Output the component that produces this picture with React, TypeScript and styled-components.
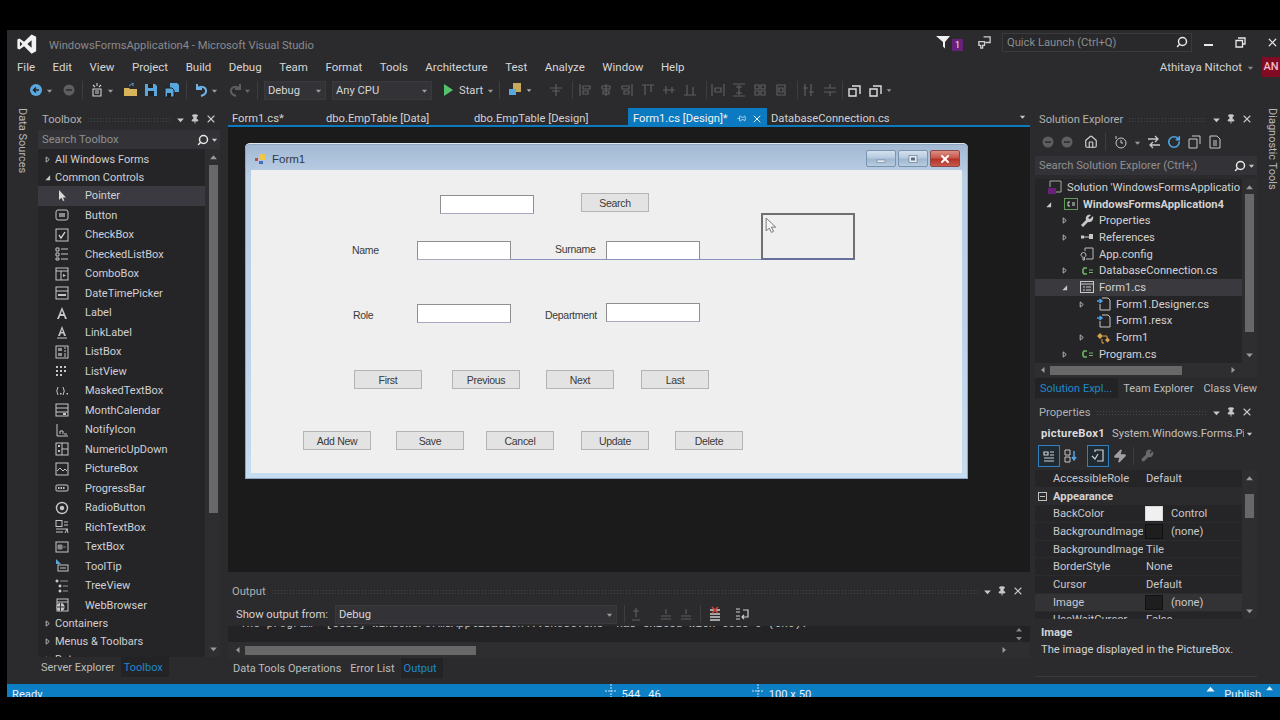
import React from "react";
import styled, { createGlobalStyle } from "styled-components";
import { Home, Pin, RotateCw, Search, Wrench, X, Zap } from "lucide-react";

const Global = createGlobalStyle`
  html, body { margin: 0; padding: 0; background: #000; }
  * { box-sizing: border-box; }
`;

const Screen = styled.div`
  width: 1280px;
  height: 720px;
  background: #000;
  padding: 30px 0 23px 7px;
  overflow: hidden;
  font-family: Roboto, "Liberation Sans", sans-serif;
  font-size: 11.2px;
  color: #d2d2d2;
`;

const Ide = styled.div`
  height: 667px;
  background: #2b2b2e;
  display: flex;
  flex-direction: column;
`;

/* ---------- small drawings ---------- */

const Svg = styled.svg<{ $w?: number }>`
  width: ${(p) => p.$w ?? 16}px;
  height: ${(p) => p.$w ?? 16}px;
  flex: none;
  display: block;
`;

const Tri = ({ dir = "down", color = "#c8c8c8", size = 7 }: { dir?: "down" | "right" | "open" | "up" | "left" | "east"; color?: string; size?: number }) => {
  const paths: Record<string, React.ReactNode> = {
    down: <path d="M1 3h6L4 6.500z" fill={color} />,
    up: <path d="M1 5.500h6L4 2z" fill={color} />,
    left: <path d="M5.500 1v6L2 4z" fill={color} />,
    east: <path d="M2.500 1v6L6 4z" fill={color} />,
    right: <path d="M2.500 1v6L6 4z" fill="none" stroke={color} strokeWidth="1" />,
    open: <path d="M7 1.500V7H1.500z" fill={color} />,
  };
  return <Svg $w={size} viewBox="0 0 8 8">{paths[dir]}</Svg>;
};

const Logo = () => (
  <Svg $w={22} viewBox="0 0 24 24">
    <path fill="#f2f2f2" fillRule="evenodd" d="M17 1.500l5 2.500v16l-5 2.500-8.200-8L3.800 18 1.500 16.800V7.200L3.800 6l5 3.500zM17 8l-4.600 4 4.600 4zM4.300 9.400v5.200L7 12z" />
  </Svg>
);

const g = "#c6c6c6";
const toolGlyphs: Record<string, React.ReactNode> = {
  Pointer: <path d="M5 2v10l2.400-2.200L9 13l1.400-.6-1.500-3H12z" fill="#d8d8d8" />,
  Button: <><rect x="2" y="3" width="12" height="10" rx="2" fill="none" stroke={g} /><rect x="5" y="6" width="6" height="4" fill="#8a8a8a" /></>,
  CheckBox: <><rect x="2" y="2" width="12" height="12" fill="none" stroke={g} /><path d="M5 8l2 3 4-6" fill="none" stroke="#e0e0e0" strokeWidth="1.300" /></>,
  CheckedListBox: <path d="M2 2h3v3H2zM2 7h3v3H2zM2 12h3v2H2zM7 3h7M7 8h7M7 13h7" fill="none" stroke={g} />,
  ComboBox: <><rect x="2" y="2" width="12" height="12" fill="none" stroke={g} /><path d="M2 5h12M7 5v9" stroke={g} /><path d="M9 8v3l3-1.500z" fill={g} /></>,
  DateTimePicker: <><rect x="2" y="2" width="12" height="12" fill="none" stroke={g} /><path d="M2 6h12" stroke={g} /><rect x="4" y="9" width="8" height="2" fill={g} /></>,
  Label: <path d="M8 2L3 14h2l1-3h4l1 3h2zM6.800 9L8 5.500 9.200 9z" fill={g} />,
  LinkLabel: <><path d="M8 2L4 12h2l.8-2.500h2.400L10 12h2zM7.200 8L8 5l.8 3z" fill={g} /><path d="M3 14h10" stroke={g} /></>,
  ListBox: <><rect x="2" y="2" width="12" height="12" fill="none" stroke={g} /><path d="M4 4h4v3H4zM4 9h4v3H4z" fill="#8f8f8f" /><path d="M10 4h2M10 7h2M10 10h2M10 12h2" stroke={g} /></>,
  ListView: <path d="M2 3h2v2H2zM6 3h2v2H6zM10 3h2v2h-2zM2 7h2v2H2zM6 7h2v2H6zM10 7h2v2h-2zM2 11h2v2H2zM6 11h2v2H6z" fill={g} />,
  MaskedTextBox: <><path d="M4 4Q1.500 8 4 12M9 4q2.500 4 0 8" fill="none" stroke={g} /><path d="M6 10h1.500v1.500H6zM12.500 10H14v1.500h-1.500z" fill={g} /></>,
  MonthCalendar: <><rect x="2" y="2" width="12" height="12" fill="none" stroke={g} /><path d="M2 6h12M2 10h12" stroke={g} /><rect x="9" y="11" width="3" height="2" fill={g} /></>,
  NotifyIcon: <path d="M3 2v12h11M6 12V9h3v3M10 12h3" fill="none" stroke={g} />,
  NumericUpDown: <><rect x="2" y="2" width="12" height="12" fill="none" stroke={g} /><path d="M8 2v12M8 8h6" stroke={g} /><path d="M4 5h2M4 10h2" stroke={g} strokeWidth="2" /></>,
  PictureBox: <><rect x="2" y="2" width="12" height="12" fill="none" stroke={g} /><path d="M3 10l3-3 3 3 2-2 2 2" fill="none" stroke={g} /></>,
  ProgressBar: <><rect x="2" y="5" width="12" height="6" rx="1" fill="none" stroke={g} /><path d="M4 7h1.500v2H4zM6.500 7H8v2H6.500zM9 7h1.500v2H9z" fill={g} /></>,
  RadioButton: <><circle cx="8" cy="8" r="5.500" fill="none" stroke={g} strokeWidth="1.400" /><circle cx="8" cy="8" r="2.200" fill={g} /></>,
  RichTextBox: <><rect x="2" y="1.500" width="6" height="6" fill="none" stroke={g} /><path d="M10 3h4M10 6h4M2 10h12M2 13h7" stroke={g} /><path d="M11 14l2-4 1 4" fill="none" stroke={g} /></>,
  TextBox: <><rect x="2" y="3" width="12" height="10" fill="none" stroke={g} /><path d="M4 6h4v4H4zM9 8h3" fill="#8a8a8a" stroke="#8a8a8a" /></>,
  ToolTip: <><path d="M2 1l5 5H2z" fill="#5aa7de" /><rect x="4" y="7" width="10" height="6" fill="none" stroke={g} /><path d="M6 10h6" stroke={g} /></>,
  TreeView: <path d="M2 2h2v2H2zM6 3h8M5 7h2v2H5zM9 8h5M5 12h2v2H5zM9 13h5" fill={g} stroke={g} strokeWidth=".7" />,
  WebBrowser: <><rect x="3" y="2" width="11" height="12" fill="none" stroke={g} /><path d="M3 5h11" stroke={g} /><circle cx="6.500" cy="10" r="4" fill={g} /><path d="M3 10h7M6.500 6v8" stroke="#333" /></>,
};

const SmallFile = ({ kind }: { kind: string }) => {
  switch (kind) {
    case "solution":
      return <Svg viewBox="0 0 16 16"><path d="M3 8V2h11v11H9" fill="none" stroke="#aaa" /><rect x="1" y="9" width="8" height="6" fill="#68217a" /></Svg>;
    case "project":
      return <Svg viewBox="0 0 16 16"><rect x="1.500" y="2.500" width="13" height="11" fill="none" stroke="#5d9c55" /><path d="M7 6H5v4h2M9 7h3M9 9h3" fill="none" stroke="#cfe2cd" /></Svg>;
    case "wrench":
      return <Svg viewBox="0 0 16 16"><path d="M14 3l-3 3-2-1 3-3C9 1 6 3 7 7l-5 5 2 2 5-5c4 1 6-3 5-6z" fill="#c8c8c8" /></Svg>;
    case "refs":
      return <Svg viewBox="0 0 16 16"><path d="M2 6.500h3v3H2zM10 5h4v5h-4z" fill="#c8c8c8" /><path d="M5 8h5" stroke="#c8c8c8" /></Svg>;
    case "config":
      return <Svg viewBox="0 0 16 16"><path d="M6 5V2h8v11H7" fill="none" stroke="#bbb" /><path d="M2 9a2.500 2.500 0 0 1 5 0c0 1-1 2-1.500 2v3H4v-3C3 11 2 10 2 9z" fill="none" stroke="#bbb" /></Svg>;
    case "cs":
      return <Svg viewBox="0 0 16 16"><path d="M8 5H5L4 6.500v3L5 11h3" fill="none" stroke="#6fb367" strokeWidth="1.600" /><path d="M10 7h4M10 9.500h4" stroke="#6fb367" strokeWidth="1.200" /></Svg>;
    case "form":
      return <Svg viewBox="0 0 16 16"><rect x="1.500" y="2.500" width="13" height="11" fill="none" stroke="#c8c8c8" /><path d="M1.500 5h13M4 8h2M4 11h2M7 8h5M7 11h5" stroke="#c8c8c8" /></Svg>;
    case "class":
      return <Svg viewBox="0 0 16 16"><path d="M1 6l3-3 3 3-3 3zM9 10l2.500-2.500L14 10l-2.500 2.500z" fill="#d8a24a" /><path d="M7 6h4v2M8 13h-2V9" stroke="#d8a24a" fill="none" /></Svg>;
    default:
      return <Svg viewBox="0 0 16 16"><path d="M6 2h6l2 2v10H4V8" fill="none" stroke="#c8c8c8" /><path d="M1 5h4M3.500 3L6 5 3.500 7" fill="none" stroke="#4ea6e6" strokeWidth="1.400" /></Svg>;
  }
};

/* ---------- title bar, menu ---------- */

const TitleBar = styled.div`
  height: 27px;
  display: flex;
  align-items: center;
  padding: 0 0 0 9px;
`;

const WindowTitle = styled.span`
  margin-left: 11px;
  margin-top: 4px;
  color: #8a8a8c;
`;

const TitleRight = styled.div`
  margin-left: auto;
  display: flex;
  align-items: center;
  height: 22px;
  margin-top: -3px;
`;

const Badge = styled.span`
  width: 11px;
  height: 12px;
  margin: 5px 0 0 2px;
  background: #68217a;
  color: #eee;
  font-size: 9px;
  line-height: 12px;
  text-align: center;
`;

const QuickLaunch = styled.div`
  width: 190px;
  height: 19px;
  margin-left: 10px;
  border: 1px solid #3a3a3d;
  background: #29292b;
  display: flex;
  align-items: center;
  padding: 0 3px 0 4px;
  color: #8d8d8d;
  justify-content: space-between;
`;

const WinCtl = styled.div<{ $ml: number }>`
  margin-left: ${(p) => p.$ml}px;
  display: flex;
`;

const MenuBar = styled.div`
  height: 22px;
  display: flex;
  align-items: center;
  padding: 0 0 2px 10px;
  gap: 17.5px;
  font-size: 11.5px;
`;

const MenuItem = styled.span`
  color: #d6d6d6;
`;

const Account = styled.div`
  margin-left: auto;
  display: flex;
  align-items: center;
  gap: 5px;
`;

const Initials = styled.span`
  width: 18px;
  height: 20px;
  margin-left: 3px;
  background: #820b24;
  color: #f4b9c4;
  font-size: 11px;
  font-weight: 500;
  line-height: 20px;
  text-align: center;
`;

/* ---------- toolbar ---------- */

const ToolBar = styled.div`
  height: 22px;
  display: flex;
  align-items: center;
  padding-left: 22px;
`;

const Sep = styled.span<{ $mx?: number }>`
  width: 1px;
  height: 18px;
  margin: 0 ${(p) => p.$mx ?? 5}px;
  background: #3e3e42;
`;

const Gap = styled.span<{ $w: number }>`
  width: ${(p) => p.$w}px;
  flex: none;
`;

const Combo = styled.div<{ $w: number; $mr?: number }>`
  width: ${(p) => p.$w}px;
  height: 19px;
  margin-right: ${(p) => p.$mr ?? 4}px;
  border: 1px solid #3a3a3d;
  background: #333337;
  display: flex;
  align-items: center;
  justify-content: space-between;
  padding: 0 3px;
  color: #d6d6d6;
`;

const dim = "#5e5e60";
const AlignIcon = ({ d, color = dim }: { d: string; color?: string }) => (
  <Svg viewBox="0 0 16 16"><path d={d} fill="none" stroke={color} strokeWidth="1.200" /></Svg>
);

const alignIcons = [
  "M3 2v12M6 4h7v3H6zM6 9h5v3H6z",
  "M8 2v12M4 4h8v3H4zM5 9h6v3H5z",
  "M13 2v12M3 4h7v3H3zM5 9h5v3H5z",
  "M2 3h12M5 3v10M11 3v7",
  "M2 8h12M5 4v8M11 5v6",
  "M2 13h12M5 3v10M11 5v8",
];
const spaceIcons = ["M2 2v12M14 2v12M5 6h6v4H5z", "M2 2h12M2 14h12M8 3v10M5 5h6M5 11h6", "M3 3h4v4H3zM9 3h4v4H9zM3 9h4v4H3zM9 9h4v4H9z", "M4 3h8v10H4zM6 6h4v4H6z"];

/* ---------- main layout ---------- */

const Main = styled.div`
  flex: 1;
  display: flex;
  min-height: 0;
`;

const Rail = styled.div<{ $w: number; $pl?: number }>`
  width: ${(p) => p.$w}px;
  flex: none;
  display: flex;
  justify-content: center;
  padding: 7px 0 0 ${(p) => p.$pl ?? 0}px;
`;

const RailText = styled.span`
  writing-mode: vertical-rl;
  color: #b8b8b8;
  font-size: 11px;
  height: fit-content;
`;

const Column = styled.div<{ $w: number; $ml?: number; $pt?: number }>`
  width: ${(p) => p.$w}px;
  margin-left: ${(p) => p.$ml ?? 0}px;
  flex: none;
  display: flex;
  flex-direction: column;
  padding-top: ${(p) => p.$pt ?? 9}px;
`;

const PanelHeader = styled.div<{ $pr?: number }>`
  height: 18px;
  flex: none;
  display: flex;
  align-items: center;
  padding: 0 ${(p) => p.$pr ?? 4}px 0 4px;
  gap: 5px;
  color: #b0b0b0;
`;

const Grip = styled.span`
  flex: 1;
  height: 5px;
  background-image: radial-gradient(#46464a 0.6px, transparent 0.7px);
  background-size: 3px 3px;
`;

const HeaderIcons = () => (
  <>
    <Tri size={9} />
    <Pin size={10} color="#c8c8c8" fill="#c8c8c8" />
    <X size={12} color="#c8c8c8" strokeWidth={2.2} />
  </>
);

const SearchBox = styled.div<{ $mt: number }>`
  height: 19px;
  flex: none;
  margin-top: ${(p) => p.$mt}px;
  background: #333337;
  display: flex;
  align-items: center;
  padding: 0 2px 0 4px;
  color: #8f8f8f;
  gap: 2px;
`;

const SearchLabel = styled.span`
  flex: 1;
  white-space: nowrap;
  overflow: hidden;
`;

const MagIcon = () => <Search size={12} color="#e8e8e8" strokeWidth={3} style={{ transform: "scaleX(-1)" }} />;

/* ---------- toolbox ---------- */

const ListWrap = styled.div<{ $h: number; $mt?: number }>`
  height: ${(p) => p.$h}px;
  margin-top: ${(p) => p.$mt ?? 0}px;
  flex: none;
  display: flex;
  overflow: hidden;
`;

const ToolList = styled.div`
  flex: 1;
  min-width: 0;
  background: #252527;
  overflow: hidden;
  padding-top: 1px;
  font-size: 11px;
`;

const GroupRow = styled.div<{ $mt?: number }>`
  height: 18px;
  margin-top: ${(p) => p.$mt ?? 0}px;
  display: flex;
  align-items: center;
  padding-left: 6px;
  gap: 4px;
  color: #cfcfcf;
`;

const ToolRow = styled.div<{ $hover?: boolean }>`
  height: 19.5px;
  display: flex;
  align-items: center;
  padding-left: 16px;
  gap: 15px;
  background: ${(p) => (p.$hover ? "#3a3a40" : "transparent")};
  color: #d0d0d6;
`;

const VTrack = styled.div<{ $w?: number; $pl?: number }>`
  width: ${(p) => p.$w ?? 15}px;
  flex: none;
  background: #2e2e31;
  display: flex;
  flex-direction: column;
  align-items: center;
  padding: 4px 0 4px ${(p) => p.$pl ?? 0}px;
`;

const Thumb = styled.div<{ $mt: number; $h: number }>`
  width: 9px;
  height: ${(p) => p.$h}px;
  margin-top: ${(p) => p.$mt}px;
  background: #686868;
`;

const Push = styled.div`
  margin-top: auto;
`;

const BottomTabs = styled.div<{ $mt?: number }>`
  height: 20px;
  flex: none;
  margin-top: ${(p) => p.$mt ?? 0}px;
  display: flex;
  align-items: stretch;
  font-size: 11px;
`;

const BottomTab = styled.div<{ $active?: boolean; $pl?: number }>`
  padding: 0 6px 0 ${(p) => p.$pl ?? (p.$active ? 6 : 3)}px;
  display: flex;
  align-items: center;
  white-space: nowrap;
  background: ${(p) => (p.$active ? "#232325" : "transparent")};
  color: ${(p) => (p.$active ? "#1f88cc" : "#bdbdbd")};
`;

/* ---------- document area ---------- */

const TabStrip = styled.div`
  height: 19px;
  flex: none;
  display: flex;
  align-items: stretch;
  border-bottom: 2px solid #0b7ac0;
`;

const DocTab = styled.div<{ $w: number; $active?: boolean }>`
  width: ${(p) => p.$w}px;
  flex: none;
  display: flex;
  align-items: center;
  gap: 5px;
  padding: 4px 4px 0 ${(p) => (p.$active ? 5 : 4)}px;
  white-space: nowrap;
  background: ${(p) => (p.$active ? "#0b7ac0" : "transparent")};
  color: ${(p) => (p.$active ? "#f2f2f2" : "#d2d2d2")};
`;

const TabActions = styled.span`
  margin-left: auto;
  display: flex;
  align-items: center;
  gap: 5px;
`;

const TabEnd = styled.div`
  margin-left: auto;
  display: flex;
  align-items: center;
  padding-right: 4px;
`;

const Surface = styled.div`
  height: 445px;
  flex: none;
  background: #1b1b1c;
  padding: 16px 0 0 17px;
`;

const FormWindow = styled.div`
  width: 723px;
  height: 336px;
  border-radius: 5px 5px 0 0;
  padding: 0 6px 6px;
  display: flex;
  flex-direction: column;
  background: linear-gradient(180deg, #a2b8d3 0, #bcd0e6 10%, #bcd3ea 55%, #c6ddf0 100%);
  border-top: 1px solid #dfe7f0;
  box-shadow: inset 0 0 0 1px #8fa6c2;
`;

const FormCaption = styled.div`
  height: 26px;
  flex: none;
  display: flex;
  align-items: center;
  gap: 5px;
  padding: 3px 0 0 2px;
  color: #2e3a46;
  font-family: "Liberation Sans", sans-serif;
  font-size: 11.5px;
`;

const FormButtons = styled.div`
  margin-left: auto;
  display: flex;
  gap: 2px;
  margin-right: 2px;
`;

const CaptionBtn = styled.div<{ $close?: boolean }>`
  width: 30px;
  height: 17px;
  border: 1px solid ${(p) => (p.$close ? "#8a4a48" : "#7c93ad")};
  border-radius: 2px;
  display: flex;
  align-items: center;
  justify-content: center;
  background: ${(p) =>
    p.$close
      ? "linear-gradient(180deg, #dc8f84 0, #c8574b 45%, #b23327 55%, #c9574d 100%)"
      : "linear-gradient(180deg, #d3e1ef 0, #b6cadf 45%, #9fb7d0 55%, #b7cce1 100%)"};
`;

const Client = styled.div`
  position: relative;
  flex: 1;
  background: #efefef;
  font-family: "Liberation Sans", sans-serif;
  font-size: 10.5px;
  color: #3a3a3a;
  letter-spacing: -0.3px;
`;

/* controls on the form: their place on the design canvas is the content */
const Control = styled.div<{ $x: number; $y: number }>`
  position: absolute;
  left: ${(p) => p.$x}px;
  top: ${(p) => p.$y}px;
`;

const FormLabel = styled(Control)`
  line-height: 13px;
`;

const FormInput = styled(Control)`
  width: 94px;
  height: 19px;
  background: #fff;
  border: 1px solid #8f8f8f;
  border-bottom-color: #a8a8c0;
`;

const FormButton = styled(Control)`
  width: 68px;
  height: 19px;
  background: #e3e3e3;
  border: 1px solid #b4b4b4;
  display: flex;
  align-items: center;
  justify-content: center;
`;

const GuideLine = styled(Control)`
  width: 251px;
  height: 1px;
  background: #8594bb;
`;

const PictureBox = styled(Control)`
  width: 94px;
  height: 47px;
  border: 2px solid #707070;
  border-bottom-color: #66709a;
`;

const Cursor = styled(Control)`
  line-height: 0;
`;

/* ---------- output ---------- */

const OutputPanel = styled.div`
  height: 76px;
  margin-top: 10px;
  flex: none;
  display: flex;
  flex-direction: column;
`;

const OutputBar = styled.div`
  height: 24px;
  flex: none;
  display: flex;
  align-items: center;
  padding-left: 8px;
  margin-top: 2px;
`;

const OutputLabel = styled.span`
  width: 99px;
  flex: none;
`;

const OutputBody = styled.div`
  height: 16px;
  flex: none;
  display: flex;
  padding-right: 3px;
  background: #232325;
  overflow: hidden;
`;

const OutputText = styled.div`
  flex: 1;
  padding-left: 12px;
  margin-top: -8px;
  font-family: "Liberation Mono", monospace;
  font-size: 11px;
  line-height: 12px;
  color: #c8c8c8;
  white-space: pre;
`;

const MiniScroll = styled.div`
  width: 16px;
  flex: none;
  display: flex;
  flex-direction: column;
  align-items: center;
`;

const HScroll = styled.div<{ $pl?: number; $h?: number }>`
  height: ${(p) => p.$h ?? 16}px;
  flex: none;
  display: flex;
  align-items: center;
  padding: 0 4px 0 ${(p) => p.$pl ?? 4}px;
  background: #2e2e31;
`;

const HThumb = styled.div<{ $ml: number; $w: number }>`
  width: ${(p) => p.$w}px;
  height: 9px;
  margin-left: ${(p) => p.$ml}px;
  background: #686868;
`;

const PushRight = styled.div`
  margin-left: auto;
`;

/* ---------- solution explorer ---------- */

const SolutionBar = styled.div`
  height: 26px;
  margin-top: 1px;
  flex: none;
  display: flex;
  align-items: center;
  padding-left: 6px;
  gap: 5px;
`;

const Tree = styled.div`
  flex: 1;
  min-width: 0;
  background: #252527;
  overflow: hidden;
`;

const TreeRow = styled.div<{ $selected?: boolean; $bold?: boolean }>`
  height: 16.7px;
  display: flex;
  align-items: center;
  white-space: nowrap;
  overflow: hidden;
  background: ${(p) => (p.$selected ? "#3a3a3e" : "transparent")};
  font-weight: ${(p) => (p.$bold ? 700 : 400)};
  color: #d2d2d2;
`;

const TreeArrow = styled.span<{ $at: number }>`
  width: ${(p) => p.$at + 12}px;
  flex: none;
  display: flex;
  justify-content: flex-end;
  padding-right: 11px;
`;

const TreeLabel = styled.span`
  margin-left: 4px;
`;

/* ---------- properties ---------- */

const ObjectLine = styled.div`
  height: 19px;
  margin-top: 3px;
  flex: none;
  display: flex;
  align-items: center;
  padding: 0 4px 0 6px;
  gap: 2px;
  white-space: nowrap;
  overflow: hidden;
`;

const ObjectName = styled.b`
  width: 69px;
  flex: none;
  color: #dcdcdc;
  font-weight: 700;
  letter-spacing: 0.3px;
`;

const ObjectType = styled.span`
  flex: 1;
  overflow: hidden;
  color: #c0c0c0;
`;

const PropsBar = styled.div`
  height: 23px;
  margin-top: 1px;
  flex: none;
  display: flex;
  align-items: center;
  padding-left: 3px;
`;

const PropBtn = styled.div<{ $on?: boolean }>`
  width: 22px;
  height: 22px;
  display: flex;
  align-items: center;
  justify-content: center;
  border: 1px solid ${(p) => (p.$on ? "#2f7fc1" : "transparent")};
  background: ${(p) => (p.$on ? "#1f2a33" : "transparent")};
`;

const PropRow = styled.div<{ $selected?: boolean }>`
  height: 17.7px;
  display: flex;
  align-items: center;
  white-space: nowrap;
  background: ${(p) => (p.$selected ? "#333336" : "#252527")};
  border-bottom: 1px solid #2b2b2e;
`;

const PropName = styled.span`
  width: 108px;
  flex: none;
  padding-left: 18px;
  overflow: hidden;
  color: #c8c8cc;
`;

const PropValue = styled.span`
  flex: 1;
  display: flex;
  align-items: center;
  padding-left: 3px;
  gap: 8px;
  color: #c8c8cc;
`;

const Swatch = styled.span<{ $light?: boolean }>`
  width: 18px;
  height: 15px;
  margin-left: -1px;
  flex: none;
  background: ${(p) => (p.$light ? "#f0f0f0" : "#1e1e1f")};
  border: 1px solid ${(p) => (p.$light ? "#d8d8d8" : "#111")};
`;

const CategoryRow = styled.div`
  height: 17.7px;
  display: flex;
  align-items: center;
  background: #2b2b2e;
  font-weight: 700;
  color: #d2d2d2;
  gap: 6px;
  padding-left: 3px;
`;

const CollapseBox = styled.span`
  width: 9px;
  height: 9px;
  border: 1px solid #c0c0c0;
  position: relative;
  &::after {
    content: "";
    position: absolute;
    left: 1px;
    right: 1px;
    top: 3px;
    height: 1px;
    background: #c0c0c0;
  }
`;

const Description = styled.div`
  height: 58px;
  flex: none;
  padding: 5px 6px;
  line-height: 17px;
  border-bottom: 1px solid #3a3a3d;
`;

const StatusBar = styled.div`
  height: 13px;
  flex: none;
  background: #0b7ec4;
  color: #e8f2fa;
  display: flex;
  overflow: hidden;
  line-height: 22px;
  padding-left: 5px;
`;

const StatusCell = styled.span<{ $ml: number }>`
  margin-left: ${(p) => p.$ml}px;
  white-space: nowrap;
  display: flex;
  align-items: flex-start;
  gap: 4px;
`;

const toolItems = Object.keys(toolGlyphs);
const treeRows = [
  { at: 0, icon: "solution", label: "Solution 'WindowsFormsApplicatio", noArrow: true },
  { at: 16, icon: "project", label: "WindowsFormsApplication4", open: true, bold: true },
  { at: 32, icon: "wrench", label: "Properties" },
  { at: 32, icon: "refs", label: "References" },
  { at: 32, icon: "config", label: "App.config", noArrow: true },
  { at: 32, icon: "cs", label: "DatabaseConnection.cs" },
  { at: 32, icon: "form", label: "Form1.cs", open: true, selected: true },
  { at: 49, icon: "file", label: "Form1.Designer.cs" },
  { at: 49, icon: "file", label: "Form1.resx", noArrow: true },
  { at: 49, icon: "class", label: "Form1" },
  { at: 32, icon: "cs", label: "Program.cs" },
];

const DisabledCircle = () => (
  <Svg $w={14} viewBox="0 0 14 14"><circle cx="7" cy="7" r="5.500" fill={dim} /><path d="M4 7h6" stroke="#2b2b2e" strokeWidth="1.500" /></Svg>
);

const StatusMark = () => (
  <Svg $w={13} viewBox="0 0 13 13"><path d="M6 0v13M0 7h12" stroke="#cfe6f5" strokeDasharray="2 1" /></Svg>
);

export default function App() {
  return (
    <Screen>
      <Global />
      <Ide>
        <TitleBar>
          <Logo />
          <WindowTitle>WindowsFormsApplication4 - Microsoft Visual Studio</WindowTitle>
          <TitleRight>
            <Svg $w={14} viewBox="0 0 14 14"><path d="M0 1h14L9 7v6.500L7 11.500V7z" fill="#f0f0f0" /></Svg>
            <Badge>1</Badge>
            <Gap $w={14} />
            <Svg $w={15} viewBox="0 0 16 16"><path d="M7 2h7v6H9M2 7h6v4H6v3H4v-3H2z" fill="none" stroke="#d0d0d0" strokeWidth="1.400" /></Svg>
            <QuickLaunch>Quick Launch (Ctrl+Q)<MagIcon /></QuickLaunch>
            <WinCtl $ml={12}><Svg $w={10} viewBox="0 0 10 10"><path d="M0 7h9v2H0z" fill="#e8e8e8" /></Svg></WinCtl>
            <WinCtl $ml={21}><Svg $w={11} viewBox="0 0 11 11"><path d="M3 1h7v6H8M1 3.500h6.500V10H1z" fill="none" stroke="#e8e8e8" strokeWidth="1.300" /></Svg></WinCtl>
            <WinCtl $ml={20}><X size={13} color="#e8e8e8" strokeWidth={2.2} /></WinCtl>
            <Gap $w={1} />
          </TitleRight>
        </TitleBar>
        <MenuBar>
          {["File", "Edit", "View", "Project", "Build", "Debug", "Team", "Format", "Tools", "Architecture", "Test", "Analyze", "Window", "Help"].map((m) => (
            <MenuItem key={m}>{m}</MenuItem>
          ))}
          <Account>
            Athitaya Nitchot
            <Tri color="#8a8a8a" />
            <Initials>AN</Initials>
          </Account>
        </MenuBar>
        <ToolBar>
          <Svg $w={14} viewBox="0 0 14 14"><circle cx="7" cy="7" r="6" fill="#5aa7de" /><path d="M10 7H5M7 4.500L4.500 7 7 9.500" fill="none" stroke="#222" strokeWidth="1.500" /></Svg>
          <Gap $w={3} /><Tri color="#9a9a9a" /><Gap $w={9} />
          <DisabledCircle />
          <Sep $mx={6} />
          <Svg viewBox="0 0 16 16"><path d="M4 7h8v7H4zM4 3l2 2M8 1v3M12 3l-2 2M6 9h4M6 11h4" fill="none" stroke="#d0d0d0" strokeWidth="1.100" /></Svg>
          <Gap $w={2} /><Tri color="#9a9a9a" /><Gap $w={9} />
          <Svg viewBox="0 0 16 16"><path d="M1 6h5l1 1h7v7H1z" fill="#d8b45a" /><path d="M6 4l4-3M10 1v3" stroke="#5aa7de" fill="none" /></Svg>
          <Gap $w={4} />
          <Svg viewBox="0 0 16 16"><path d="M2 2h10l2 2v10H2z" fill="#5aa7de" /><path d="M5 2h5v4H5zM5 9h6v5H5z" fill="#202020" /></Svg>
          <Gap $w={5} />
          <Svg viewBox="0 0 16 16"><path d="M6 1h7l2 2v7H6z" fill="#5aa7de" /><path d="M1 6h7l2 2v7H1z" fill="#5aa7de" stroke="#202020" /><path d="M3 11h4v4H3z" fill="#202020" /></Svg>
          <Sep $mx={6} />
          <Svg viewBox="0 0 16 16"><path d="M4 2v5h5M4 7c2-3 8-3 9 1 .7 3-2 5-5 6" fill="none" stroke="#6fb4e8" strokeWidth="2" /></Svg>
          <Gap $w={2} /><Tri color="#9a9a9a" /><Gap $w={10} />
          <Svg viewBox="0 0 16 16"><path d="M12 2v5H7M12 7c-2-3-8-3-9 1-.7 3 2 5 5 6" fill="none" stroke={dim} strokeWidth="2" /></Svg>
          <Tri color="#6a6a6a" />
          <Sep $mx={6} />
          <Combo $w={62} $mr={6}>Debug<Tri color="#9a9a9a" /></Combo>
          <Combo $w={100} $mr={10}>Any CPU<Tri color="#9a9a9a" /></Combo>
          <Svg $w={12} viewBox="0 0 12 12"><path d="M2 0l9 6-9 6z" fill="#55c26c" /></Svg>
          <Gap $w={5} />Start<Gap $w={4} /><Tri color="#9a9a9a" />
          <Sep $mx={5} />
          <Gap $w={2} />
          <Svg viewBox="0 0 16 16"><path d="M6 1h8v9H6z" fill="#c8a85a" /><path d="M2 7h7v6H2z" fill="#5aa7de" /></Svg>
          <Gap $w={3} />
          <Tri color="#b0b0b0" size={6} />
          <Gap $w={16} />
          <AlignIcon d="M8 2v12M2 6h12M4 9h8" />
          <Gap $w={4} />
          <Sep $mx={4} />
          {alignIcons.map((d) => (
            <React.Fragment key={d}>
              <AlignIcon d={d} />
              <Gap $w={5} />
            </React.Fragment>
          ))}
          <Sep $mx={3} />
          {spaceIcons.map((d) => (
            <React.Fragment key={d}>
              <AlignIcon d={d} />
              <Gap $w={5} />
            </React.Fragment>
          ))}
          <Sep $mx={3} />
          <AlignIcon d="M4 2v12M10 2v12M2 6h5M8 10h5" />
          <Gap $w={5} />
          <AlignIcon d="M2 6h12M2 10h12M8 2v4M8 10v4" />
          <Sep $mx={4} />
          <Svg viewBox="0 0 16 16"><path d="M5 4h8v8M2 7h7v7H2z" fill="none" stroke="#e0e0e0" strokeWidth="1.400" /></Svg>
          <Gap $w={5} />
          <Svg viewBox="0 0 16 16"><path d="M5 4h8v8M2 7h7v7H2z" fill="none" stroke="#e0e0e0" strokeWidth="1.400" /></Svg>
          <Gap $w={2} />
          <Tri color="#9a9a9a" size={6} />
        </ToolBar>
        <Main>
          <Rail $w={31}>
            <RailText>Data Sources</RailText>
          </Rail>
          <Column $w={182}>
            <PanelHeader $pr={3}>Toolbox<Grip /><HeaderIcons /></PanelHeader>
            <SearchBox $mt={2}><SearchLabel>Search Toolbox</SearchLabel><MagIcon /><Tri /></SearchBox>
            <ListWrap $h={508}>
              <ToolList>
                <GroupRow><Tri dir="right" />All Windows Forms</GroupRow>
                <GroupRow><Tri dir="open" />Common Controls</GroupRow>
                {toolItems.map((name) => (
                  <ToolRow key={name} $hover={name === "Pointer"}>
                    <Svg viewBox="0 0 16 16">{toolGlyphs[name]}</Svg>
                    {name}
                  </ToolRow>
                ))}
                <GroupRow $mt={-1}><Tri dir="right" />Containers</GroupRow>
                <GroupRow><Tri dir="right" />Menus &amp; Toolbars</GroupRow>
                <GroupRow><Tri dir="right" />Data</GroupRow>
              </ToolList>
              <VTrack $pl={2}>
                <Tri dir="up" size={9} color="#999" />
                <Thumb $mt={3} $h={348} />
                <Push><Tri size={9} color="#999" /></Push>
              </VTrack>
            </ListWrap>
            <BottomTabs>
              <BottomTab>Server Explorer</BottomTab>
              <BottomTab $active $pl={3}>Toolbox</BottomTab>
            </BottomTabs>
          </Column>
          <Column $w={802} $ml={8} $pt={7}>
            <TabStrip>
              <DocTab $w={94}>Form1.cs*</DocTab>
              <DocTab $w={148}>dbo.EmpTable [Data]</DocTab>
              <DocTab $w={158}>dbo.EmpTable [Design]</DocTab>
              <DocTab $w={139} $active>
                Form1.cs [Design]*
                <TabActions>
                  <Pin size={9} color="#e8e8e8" style={{ transform: "rotate(90deg)" }} />
                  <X size={12} color="#f2f2f2" />
                </TabActions>
              </DocTab>
              <DocTab $w={200}>DatabaseConnection.cs</DocTab>
              <TabEnd><Tri /></TabEnd>
            </TabStrip>
            <Surface>
              <FormWindow>
                <FormCaption>
                  <Svg $w={14} viewBox="0 0 14 14"><rect x="6" y="2" width="6" height="6" fill="#eec64a" /><rect x="2" y="6" width="3" height="3" fill="#c04a4a" /><rect x="6" y="9" width="4" height="3" fill="#4a6ac0" /></Svg>
                  Form1
                  <FormButtons>
                    <CaptionBtn><Svg $w={12} viewBox="0 0 12 12"><rect x="2" y="7" width="8" height="2.500" fill="#e8eef4" stroke="#6c7c90" strokeWidth=".6" /></Svg></CaptionBtn>
                    <CaptionBtn><Svg $w={12} viewBox="0 0 12 12"><rect x="2" y="2.500" width="8" height="7" fill="#e8eef4" stroke="#5c6c80" strokeWidth=".6" /><rect x="4" y="4.500" width="4" height="3" fill="#5c6c80" /></Svg></CaptionBtn>
                    <CaptionBtn $close><X size={12} color="#fff" strokeWidth={4} /></CaptionBtn>
                  </FormButtons>
                </FormCaption>
                <Client>
                  <FormInput $x={189} $y={25} />
                  <FormButton $x={330} $y={23}>Search</FormButton>
                  <FormLabel $x={101} $y={74}>Name</FormLabel>
                  <FormInput $x={166} $y={71} />
                  <FormLabel $x={304} $y={73}>Surname</FormLabel>
                  <FormInput $x={355} $y={71} />
                  <GuideLine $x={259} $y={89} />
                  <PictureBox $x={510} $y={43} />
                  <Cursor $x={513} $y={47}>
                    <Svg $w={17} viewBox="0 0 14 16"><path d="M1 1v12l3-2.500 2 4 2-1-2-4h4z" fill="#f4f4f4" stroke="#555" strokeWidth=".7" /></Svg>
                  </Cursor>
                  <FormLabel $x={102} $y={139}>Role</FormLabel>
                  <FormInput $x={166} $y={134} />
                  <FormLabel $x={294} $y={139}>Department</FormLabel>
                  <FormInput $x={355} $y={133} />
                  <FormButton $x={103} $y={200}>First</FormButton>
                  <FormButton $x={201} $y={200}>Previous</FormButton>
                  <FormButton $x={295} $y={200}>Next</FormButton>
                  <FormButton $x={390} $y={200}>Last</FormButton>
                  <FormButton $x={52} $y={261}>Add New</FormButton>
                  <FormButton $x={145} $y={261}>Save</FormButton>
                  <FormButton $x={235} $y={261}>Cancel</FormButton>
                  <FormButton $x={330} $y={261}>Update</FormButton>
                  <FormButton $x={424} $y={261}>Delete</FormButton>
                </Client>
              </FormWindow>
            </Surface>
            <OutputPanel>
              <PanelHeader $pr={6}>Output<Grip /><HeaderIcons /></PanelHeader>
              <OutputBar>
                <OutputLabel>Show output from:</OutputLabel>
                <Combo $w={282}>Debug<Tri color="#9a9a9a" /></Combo>
                <Sep $mx={3} />
                <AlignIcon d="M4 14h8M8 2v9M5 5h6" />
                <Gap $w={14} />
                <AlignIcon d="M3 13h10M3 10h10M8 3v5" />
                <Gap $w={4} />
                <AlignIcon d="M3 13h10M3 10h10M8 8V3" />
                <Sep $mx={6} />
                <Svg viewBox="0 0 16 16"><path d="M3 4h10M3 8h10M3 11h10M3 14h10" stroke="#d0d0d0" strokeWidth="1.400" /><path d="M5 1l6 6M11 1L5 7" stroke="#d0433a" strokeWidth="1.600" /></Svg>
                <Gap $w={11} />
                <Svg viewBox="0 0 16 16"><path d="M2 3h4M2 6h4M2 10h4M2 13h4M9 4h5v7H8M10 9l-2 2 2 2" fill="none" stroke="#d0d0d0" strokeWidth="1.200" /></Svg>
              </OutputBar>
              <OutputBody>
                <OutputText>The program '[5588] WindowsFormsApplication4.vshost.exe' has exited with code 0 (0x0).</OutputText>
                <MiniScroll>
                  <Tri dir="up" size={8} color="#888" />
                  <Tri size={8} color="#888" />
                </MiniScroll>
              </OutputBody>
              <HScroll $pl={6}>
                <Tri dir="left" size={8} color="#999" />
                <HThumb $ml={3} $w={231} />
                <PushRight><Tri dir="east" size={8} color="#999" /></PushRight>
                <Gap $w={18} />
              </HScroll>
            </OutputPanel>
            <BottomTabs>
              <BottomTab $pl={5}>Data Tools Operations</BottomTab>
              <BottomTab>Error List</BottomTab>
              <BottomTab $active $pl={3}>Output</BottomTab>
            </BottomTabs>
          </Column>
          <Column $w={222} $ml={5}>
            <PanelHeader>Solution Explorer<Grip /><HeaderIcons /></PanelHeader>
            <SolutionBar>
              <DisabledCircle />
              <DisabledCircle />
              <Gap $w={0} />
              <Home size={14} color="#d0d0d0" />
              <Sep $mx={2} />
              <Svg viewBox="0 0 16 16"><circle cx="8" cy="9" r="5" fill="none" stroke="#c8c8c8" /><path d="M8 6v3h2M3 2v3" fill="none" stroke="#c8c8c8" /></Svg>
              <Tri color="#9a9a9a" />
              <Svg viewBox="0 0 16 16"><path d="M2 5h10M9 2l3 3-3 3M14 11H4M7 8l-3 3 3 3" fill="none" stroke="#c8c8c8" strokeWidth="1.300" /></Svg>
              <RotateCw size={14} color="#4ea6e6" strokeWidth={2.8} />
              <Svg viewBox="0 0 16 16"><path d="M6 2h8v8M3 5h8v9H3z" fill="none" stroke="#c8c8c8" /></Svg>
              <Svg viewBox="0 0 16 16"><path d="M3 2h7l3 3v9H3zM6 7h4M6 9h4M6 11h4" fill="none" stroke="#c8c8c8" /></Svg>
            </SolutionBar>
            <SearchBox $mt={1}><SearchLabel>Search Solution Explorer (Ctrl+;)</SearchLabel><MagIcon /><Tri /></SearchBox>
            <ListWrap $h={184} $mt={4}>
              <Tree>
                {treeRows.map((r) => (
                  <TreeRow key={r.label} $selected={r.selected} $bold={r.bold}>
                    <TreeArrow $at={r.at}>
                      {!r.noArrow && <Tri dir={r.open ? "open" : "right"} />}
                    </TreeArrow>
                    <SmallFile kind={r.icon} />
                    <TreeLabel>{r.label}</TreeLabel>
                  </TreeRow>
                ))}
              </Tree>
              <VTrack>
                <Tri dir="up" size={9} color="#999" />
                <Thumb $mt={2} $h={138} />
                <Push><Tri size={9} color="#999" /></Push>
              </VTrack>
            </ListWrap>
            <HScroll $h={14}>
              <Tri dir="left" size={8} color="#999" />
              <HThumb $ml={3} $w={132} />
              <PushRight><Tri dir="east" size={8} color="#999" /></PushRight>
              <Gap $w={16} />
            </HScroll>
            <BottomTabs $mt={1}>
              <BottomTab $active $pl={5}>Solution Expl...</BottomTab>
              <BottomTab $pl={5}>Team Explorer</BottomTab>
              <BottomTab $pl={4}>Class View</BottomTab>
            </BottomTabs>
            <Gap $w={0} style={{ height: 5 }} />
            <PanelHeader>Properties<Grip /><HeaderIcons /></PanelHeader>
            <ObjectLine>
              <ObjectName>pictureBox1</ObjectName>
              <ObjectType>System.Windows.Forms.Pi</ObjectType>
              <Tri />
            </ObjectLine>
            <PropsBar>
              <PropBtn $on><AlignIcon color="#d0d0d0" d="M3 4h4v3H3zM9 4h4M9 7h4M3 10h10M3 13h10" /></PropBtn>
              <PropBtn><Svg viewBox="0 0 16 16"><path d="M2 2h5v5H2zM2 9h5v5H2z" fill="none" stroke="#c8c8c8" /><path d="M11 3v9M9 9l2 3 2-3" fill="none" stroke="#4ea6e6" strokeWidth="1.500" /></Svg></PropBtn>
              <Gap $w={5} />
              <PropBtn $on><Svg viewBox="0 0 16 16"><path d="M5 4V2h8v11H7M2 8l3 3 3-5" fill="none" stroke="#d0d0d0" strokeWidth="1.200" /></Svg></PropBtn>
              <PropBtn><Zap size={14} color="#a0a0a0" fill="#a0a0a0" /></PropBtn>
              <Sep $mx={2} />
              <PropBtn><Wrench size={13} color="#6a6a6a" fill="#6a6a6a" /></PropBtn>
            </PropsBar>
            <ListWrap $h={149} $mt={3}>
              <Tree>
                <PropRow><PropName>AccessibleRole</PropName><PropValue>Default</PropValue></PropRow>
                <CategoryRow><CollapseBox />Appearance</CategoryRow>
                <PropRow><PropName>BackColor</PropName><PropValue><Swatch $light />Control</PropValue></PropRow>
                <PropRow><PropName>BackgroundImage</PropName><PropValue><Swatch />(none)</PropValue></PropRow>
                <PropRow><PropName>BackgroundImage</PropName><PropValue>Tile</PropValue></PropRow>
                <PropRow><PropName>BorderStyle</PropName><PropValue>None</PropValue></PropRow>
                <PropRow><PropName>Cursor</PropName><PropValue>Default</PropValue></PropRow>
                <PropRow $selected><PropName>Image</PropName><PropValue><Swatch />(none)</PropValue></PropRow>
                <PropRow><PropName>UseWaitCursor</PropName><PropValue>False</PropValue></PropRow>
              </Tree>
              <VTrack>
                <Tri dir="up" size={9} color="#999" />
                <Thumb $mt={11} $h={24} />
                <Push><Tri size={9} color="#999" /></Push>
              </VTrack>
            </ListWrap>
            <Description>
              <b>Image</b>
              <br />
              The image displayed in the PictureBox.
            </Description>
          </Column>
          <Rail $w={23} $pl={7}>
            <RailText>Diagnostic Tools</RailText>
          </Rail>
        </Main>
        <StatusBar>
          Ready
          <StatusCell $ml={562}><StatusMark />544 , 46</StatusCell>
          <StatusCell $ml={91}><StatusMark />100 x 50</StatusCell>
          <StatusCell $ml={394}><Tri dir="up" size={11} color="#e8f2fa" /><Gap $w={0} />Publish<Tri dir="up" size={9} color="#e8f2fa" /></StatusCell>
        </StatusBar>
      </Ide>
    </Screen>
  );
}
